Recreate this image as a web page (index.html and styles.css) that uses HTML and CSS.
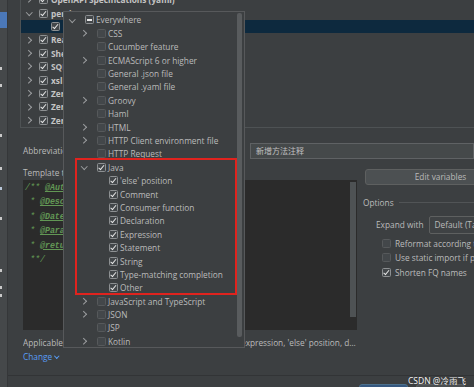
FILE: index.html
```html
<!DOCTYPE html>
<html lang="en">
<head>
<meta charset="UTF-8">
<meta name="viewport" content="width=device-width, initial-scale=1.0">
<title>Live Templates</title>
<link rel="stylesheet" href="styles.css">
</head>
<body>
<div class="window">
  <aside class="nav">
    <div class="nav-active"></div>
    <div class="nav-marks"></div>
  </aside>

  <main class="panel">
    <!-- template groups -->
    <div class="groups">
      <div class="group-row"><span class="chev right"></span><span class="cb on"></span><span class="group-name">OpenAPI Specifications (yaml)</span></div>
      <div class="group-row"><span class="chev down"></span><span class="cb on"></span><span class="group-name">persion</span></div>
      <div class="group-row selected child"><span class="cb on"></span><span class="item-name">add</span></div>
      <div class="group-row"><span class="chev right"></span><span class="cb on"></span><span class="group-name">React</span></div>
      <div class="group-row"><span class="chev right"></span><span class="cb on"></span><span class="group-name">Shell Script</span></div>
      <div class="group-row"><span class="chev right"></span><span class="cb on"></span><span class="group-name">SQL</span></div>
      <div class="group-row"><span class="chev right"></span><span class="cb on"></span><span class="group-name">xsl</span></div>
      <div class="group-row"><span class="chev right"></span><span class="cb on"></span><span class="group-name">Zen CSS</span></div>
      <div class="group-row"><span class="chev right"></span><span class="cb on"></span><span class="group-name">Zen HTML</span></div>
      <div class="group-row"><span class="chev right"></span><span class="cb on"></span><span class="group-name">Zen XSL</span></div>
    </div>

    <div class="field-row">
      <span class="label">Abbreviation:</span>
      <div class="input">add</div>
      <span class="label">Description:</span>
      <div class="input cjk">新增方法注释</div>
    </div>

    <div class="template">
      <div class="template-main">
        <div class="label">Template text:</div>
        <div class="code">
          <div class="code-lines">
            <div class="ln">/** <u>@Author</u> $user$</div>
            <div class="ln"> * <u>@Description</u></div>
            <div class="ln"> * <u>@Date</u> $date$</div>
            <div class="ln"> * <u>@Param</u> $param$</div>
            <div class="ln"> * <u>@return</u></div>
            <div class="ln"> **/</div>
          </div>
          <div class="code-scroll"><div class="thumb"></div></div>
        </div>
        <div class="applicable">Applicable in Java: other, statement, consumer function, expression, 'else' position, declaration, string</div>
        <a class="change">Change <span class="chev down small"></span></a>
      </div>

      <div class="template-side">
        <button class="btn edit-vars">Edit variables</button>
        <div class="options">
          <div class="options-title">Options</div>
          <div class="expand-row">
            <span class="label">Expand with</span>
            <div class="select">Default (Tab)</div>
          </div>
          <div class="opt-row"><span class="cb"></span>Reformat according to style</div>
          <div class="opt-row"><span class="cb"></span>Use static import if possible</div>
          <div class="opt-row"><span class="cb on"></span>Shorten FQ names</div>
        </div>
      </div>
    </div>

    <footer class="dialog-foot">
      <button class="btn primary">OK</button>
      <button class="btn">Cancel</button>
    </footer>
  </main>

  <!-- context popup -->
  <div class="context-popup">
    <div class="ctx-list">
      <div class="ctx-row"><span class="chev down"></span><span class="cb part"></span>Everywhere</div>
      <div class="ctx-row lv1"><span class="chev right"></span><span class="cb"></span>CSS</div>
      <div class="ctx-row lv1"><span class="chev"></span><span class="cb"></span>Cucumber feature</div>
      <div class="ctx-row lv1"><span class="chev right"></span><span class="cb"></span>ECMAScript 6 or higher</div>
      <div class="ctx-row lv1"><span class="chev"></span><span class="cb"></span>General .json file</div>
      <div class="ctx-row lv1"><span class="chev"></span><span class="cb"></span>General .yaml file</div>
      <div class="ctx-row lv1"><span class="chev right"></span><span class="cb"></span>Groovy</div>
      <div class="ctx-row lv1"><span class="chev"></span><span class="cb"></span>Haml</div>
      <div class="ctx-row lv1"><span class="chev right"></span><span class="cb"></span>HTML</div>
      <div class="ctx-row lv1"><span class="chev right"></span><span class="cb"></span>HTTP Client environment file</div>
      <div class="ctx-row lv1"><span class="chev"></span><span class="cb"></span>HTTP Request</div>
      <div class="ctx-row lv1"><span class="chev down"></span><span class="cb on"></span>Java</div>
      <div class="ctx-row lv2"><span class="chev"></span><span class="cb on"></span>'else' position</div>
      <div class="ctx-row lv2"><span class="chev"></span><span class="cb on"></span>Comment</div>
      <div class="ctx-row lv2"><span class="chev"></span><span class="cb on"></span>Consumer function</div>
      <div class="ctx-row lv2"><span class="chev"></span><span class="cb on"></span>Declaration</div>
      <div class="ctx-row lv2"><span class="chev"></span><span class="cb on"></span>Expression</div>
      <div class="ctx-row lv2"><span class="chev"></span><span class="cb on"></span>Statement</div>
      <div class="ctx-row lv2"><span class="chev"></span><span class="cb on"></span>String</div>
      <div class="ctx-row lv2"><span class="chev"></span><span class="cb on"></span>Type-matching completion</div>
      <div class="ctx-row lv2"><span class="chev"></span><span class="cb on"></span>Other</div>
      <div class="ctx-row lv1"><span class="chev right"></span><span class="cb"></span>JavaScript and TypeScript</div>
      <div class="ctx-row lv1"><span class="chev right"></span><span class="cb"></span>JSON</div>
      <div class="ctx-row lv1"><span class="chev"></span><span class="cb"></span>JSP</div>
      <div class="ctx-row lv1"><span class="chev right"></span><span class="cb"></span>Kotlin</div>
    </div>
    <div class="ctx-scroll"><div class="thumb"></div></div>
  </div>

  <div class="highlight"></div>
  <div class="watermark">CSDN @冷雨飞</div>
</div>
</body>
</html>
```

FILE: styles.css
```css
body {
  margin: 0;
  padding: 0;
  background-color: #3c3f41;
  font-family: "Open Sans", "Noto Sans CJK SC", sans-serif;
  font-size: 8.3px;
  color: #bbbbbb;
  overflow: hidden;
}
.window {
  position: relative;
  display: flex;
  width: 474px;
  height: 387px;
  overflow: hidden;
}

/* settings tree on the left, mostly off screen */
.nav {
  flex: 0 0 7px;
  background-color: #45484a;
  border-right: 1px solid #353739;
}
.nav-active {
  height: 16px;
  margin-top: 12px;
  background-color: #4b78b8;
}
.nav-marks {
  width: 2px;
  height: 3px;
  margin-top: -28px;
  box-shadow: 0 67px #c9c9c9, 0 84px #c9c9c9, 0 134px #c9c9c9, 0 167px #c9c9c9,
    0 187px #b8c6d8, 0 217px #c9c9c9, 0 269px #c9c9c9, 0 286px #c9c9c9, 0 294px #c9c9c9;
}

.panel {
  flex: 1;
  min-width: 0;
  display: flex;
  flex-direction: column;
  padding-left: 12px;
  overflow: hidden;
}

/* checkbox + chevrons */
.cb {
  flex: 0 0 auto;
  display: inline-flex;
  align-items: center;
  justify-content: center;
  box-sizing: border-box;
  width: 9px;
  height: 9px;
  border: 1px solid #56595b;
  border-radius: 1.5px;
  background-color: #43474a;
}
.cb.on,
.cb.part {
  border-color: #8d9092;
}
.cb.on::after {
  content: '';
  width: 2px;
  height: 4.5px;
  margin-top: -1.5px;
  border: solid #e8e8e8;
  border-width: 0 1.3px 1.3px 0;
  transform: rotate(40deg);
}
.cb.part::after {
  content: '';
  width: 5px;
  height: 1.4px;
  background-color: #e8e8e8;
}
.chev {
  flex: 0 0 auto;
  display: inline-flex;
  align-items: center;
  justify-content: center;
  width: 8px;
  height: 8px;
}
.chev.right::before,
.chev.down::before {
  content: '';
  width: 3.5px;
  height: 3.5px;
  border: solid #9a9c9e;
  border-width: 0 1.1px 1.1px 0;
}
.chev.right::before {
  transform: rotate(-45deg);
  margin-left: -2px;
}
.chev.down::before {
  transform: rotate(45deg);
  margin-top: -2px;
}

.groups {
  margin-top: -7px;
  height: 134px;
  border-left: 1px solid #4e5254;
  border-bottom: 1px solid #4e5254;
}
.group-row {
  display: flex;
  align-items: center;
  height: 13.4px;
  padding-left: 4px;
}
.group-row .chev {
  margin-right: 6px;
}
.group-row .cb {
  margin-right: 3px;
}
.group-name {
  font-weight: bold;
  color: #c4c4c4;
  white-space: nowrap;
}
.group-row.child {
  padding-left: 30px;
}
.group-row.selected {
  background-color: #0d293e;
}

.field-row {
  display: grid;
  grid-template-columns: 70px 96px 58px 1fr;
  column-gap: 1px;
  align-items: center;
  height: 16px;
  margin-top: 15px;
  padding-left: 3px;
}
.input {
  box-sizing: border-box;
  height: 16px;
  line-height: 14px;
  padding-left: 5px;
  border: 1px solid #5f6264;
  background-color: #45494a;
  white-space: nowrap;
}
.input.cjk {
  font-size: 8px;
  color: #c0c0c0;
}

.template {
  display: flex;
  gap: 6px;
  margin-top: 8px;
  padding-left: 3px;
  height: 197px;
}
.template-main {
  flex: 0 0 334px;
  min-width: 0;
  display: flex;
  flex-direction: column;
}
.template-main .label {
  height: 13px;
  line-height: 12px;
}
.code {
  display: flex;
  height: 150px;
  background-color: #2b2b2b;
}
.code-lines {
  flex: 1;
  padding: 1px 0 0 2px;
  font-family: "Liberation Mono", monospace;
  font-size: 8.3px;
  line-height: 14.4px;
  font-style: italic;
  color: #629755;
}
.code-lines .ln {
  white-space: pre;
}
.code-lines u {
  font-weight: bold;
  text-decoration-thickness: 1px;
}
.code-scroll {
  flex: 0 0 7px;
  padding-top: 2px;
}
.code-scroll .thumb {
  width: 6px;
  height: 135px;
  background-color: #4e5254;
}
.applicable {
  margin-top: 6px;
  height: 14px;
  line-height: 14px;
  white-space: nowrap;
  overflow: hidden;
  text-overflow: ellipsis;
}
.change {
  display: flex;
  align-items: center;
  gap: 2px;
  height: 14px;
  color: #589df6;
}
.chev.small {
  width: 6px;
}
.chev.small::before {
  border-color: #589df6;
  width: 2.5px;
  height: 2.5px;
}

.template-side {
  flex: 1;
  min-width: 0;
  display: flex;
  flex-direction: column;
}
.btn {
  flex: 0 0 auto;
  box-sizing: border-box;
  height: 16px;
  padding: 0;
  border: 1px solid #5e6060;
  border-radius: 3px;
  background-color: #4c5052;
  color: #bbbbbb;
  font-family: inherit;
  font-size: inherit;
}
.edit-vars {
  width: 151px;
  margin: 2px 0 0 2px;
}
.options-title {
  display: flex;
  align-items: center;
  margin-top: 12px;
  line-height: 12px;
}
.options-title::after {
  content: '';
  flex: 1;
  margin-left: 5px;
  border-top: 1px solid #515456;
}
.expand-row {
  display: flex;
  align-items: center;
  gap: 5px;
  height: 18px;
  margin-top: 7px;
  padding-left: 13px;
  white-space: nowrap;
}
.select {
  flex: 0 0 auto;
  box-sizing: border-box;
  width: 80px;
  height: 18px;
  line-height: 16px;
  padding-left: 5px;
  border: 1px solid #5e6060;
  border-radius: 2px;
  background-color: #3f4244;
  white-space: nowrap;
}
.opt-row {
  display: flex;
  align-items: center;
  gap: 4px;
  height: 14.5px;
  padding-left: 19px;
  white-space: nowrap;
}
.options .expand-row + .opt-row {
  margin-top: 2px;
}

.dialog-foot {
  display: flex;
  justify-content: flex-end;
  gap: 8px;
  margin: 11px 0 0 -12px;
  padding: 8px 9px 0 0;
  border-top: 1px solid #323436;
}
.dialog-foot .btn {
  width: 49px;
  height: 22px;
}
.dialog-foot .primary {
  background-color: #365880;
  border-color: #4c708c;
}

/* popup over the groups list */
.context-popup {
  position: absolute;
  left: 63px;
  top: 11px;
  display: flex;
  box-sizing: border-box;
  width: 182px;
  height: 337px;
  border: 1px solid #57595b;
  background-color: #3c3f41;
}
.ctx-list {
  flex: 1;
  padding-top: 1.3px;
}
.ctx-row {
  display: flex;
  align-items: center;
  height: 13.4px;
  padding-left: 4px;
  white-space: nowrap;
}
.ctx-row .chev {
  margin-right: 9px;
}
.ctx-row .cb {
  margin-right: 2px;
}
.ctx-row.lv1 {
  padding-left: 16px;
}
.ctx-row.lv2 {
  padding-left: 28px;
}
.ctx-scroll {
  flex: 0 0 7px;
  padding-top: 1px;
}
.ctx-scroll .thumb {
  width: 5px;
  height: 324px;
  border-radius: 2px;
  background-color: #595c5e;
}

.highlight {
  position: absolute;
  left: 75px;
  top: 158px;
  width: 158px;
  height: 133px;
  border: 2px solid #e0231e;
}
.watermark {
  position: absolute;
  right: 8px;
  bottom: 1px;
  font-family: "Noto Sans", "Noto Sans CJK SC", sans-serif;
  font-size: 8.5px;
  color: #f2f2f2;
  text-shadow: 0 0 1px #222;
}
```
